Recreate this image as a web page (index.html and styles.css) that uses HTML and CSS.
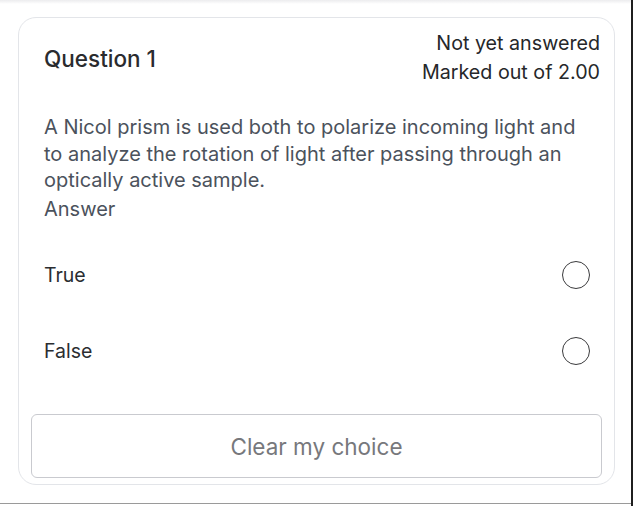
FILE: index.html
```html
<!DOCTYPE html>
<html>
<head>
<meta charset="utf-8">
<link rel="stylesheet" href="styles.css">
</head>
<body>
<div class="screen">
  <div class="topshade"></div>
  <div class="card">
    <div class="header">
      <div class="qtitle">Question 1</div>
      <div class="meta">
        <div>Not yet answered</div>
        <div>Marked out of 2.00</div>
      </div>
    </div>
    <div class="qtext">A Nicol prism is used both to polarize incoming light and to analyze the rotation of light after passing through an optically active sample.</div>
    <div class="answer-label">Answer</div>
    <div class="options">
      <div class="option"><span class="opt-label">True</span><span class="radio"></span></div>
      <div class="option"><span class="opt-label">False</span><span class="radio"></span></div>
    </div>
    <div class="clear-btn">Clear my choice</div>
  </div>
  <div class="bottomline"></div>
</div>
</body>
</html>
```
FILE: styles.css
```css
html, body {
  margin: 0;
  padding: 0;
  background: #ffffff;
}
body {
  width: 633px;
  height: 506px;
  overflow: hidden;
  font-family: "Inter", "Liberation Sans", sans-serif;
}
.screen {
  width: 631px;
  height: 506px;
  border-right: 2px solid #1f1f1f;
  display: flex;
  flex-direction: column;
}
.topshade {
  height: 4px;
  background: linear-gradient(#ececee, #ffffff);
}
.card {
  margin: 13px 0 0 18px;
  width: 571px;
  height: 466px;
  border: 1px solid #e3e5e9;
  border-radius: 18px;
  padding: 0 12px;
  display: flex;
  flex-direction: column;
}
.header {
  display: flex;
  justify-content: space-between;
  align-items: center;
  padding: 11px 2px 0 13px;
}
.qtitle {
  font-size: 22.5px;
  font-weight: 500;
  color: #2a2b2e;
}
.meta {
  text-align: right;
  font-size: 19.7px;
  line-height: 29px;
  color: #26272a;
}
.qtext {
  margin-top: 27px;
  padding: 0 13px;
  font-size: 20px;
  line-height: 26.5px;
  color: #4b525c;
}
.answer-label {
  margin-top: 2px;
  padding: 0 13px;
  font-size: 20px;
  line-height: 26.5px;
  color: #4b525c;
}
.options {
  margin-top: 38px;
  display: flex;
  flex-direction: column;
  gap: 46px;
}
.option {
  display: flex;
  justify-content: space-between;
  align-items: center;
  height: 30px;
  padding: 0 12px 0 13px;
}
.opt-label {
  font-size: 19.5px;
  color: #2b2d31;
}
.radio {
  width: 26px;
  height: 26px;
  border: 1.8px solid #3a3a3c;
  border-radius: 50%;
}
.clear-btn {
  margin-top: 48px;
  height: 62px;
  border: 1.5px solid #c9cacf;
  border-radius: 6px;
  display: flex;
  align-items: center;
  justify-content: center;
  font-size: 22.5px;
  color: #77787c;
}
.bottomline {
  margin-top: auto;
  margin-bottom: 2px;
  height: 1px;
  background: #9a9a9a;
}
```
